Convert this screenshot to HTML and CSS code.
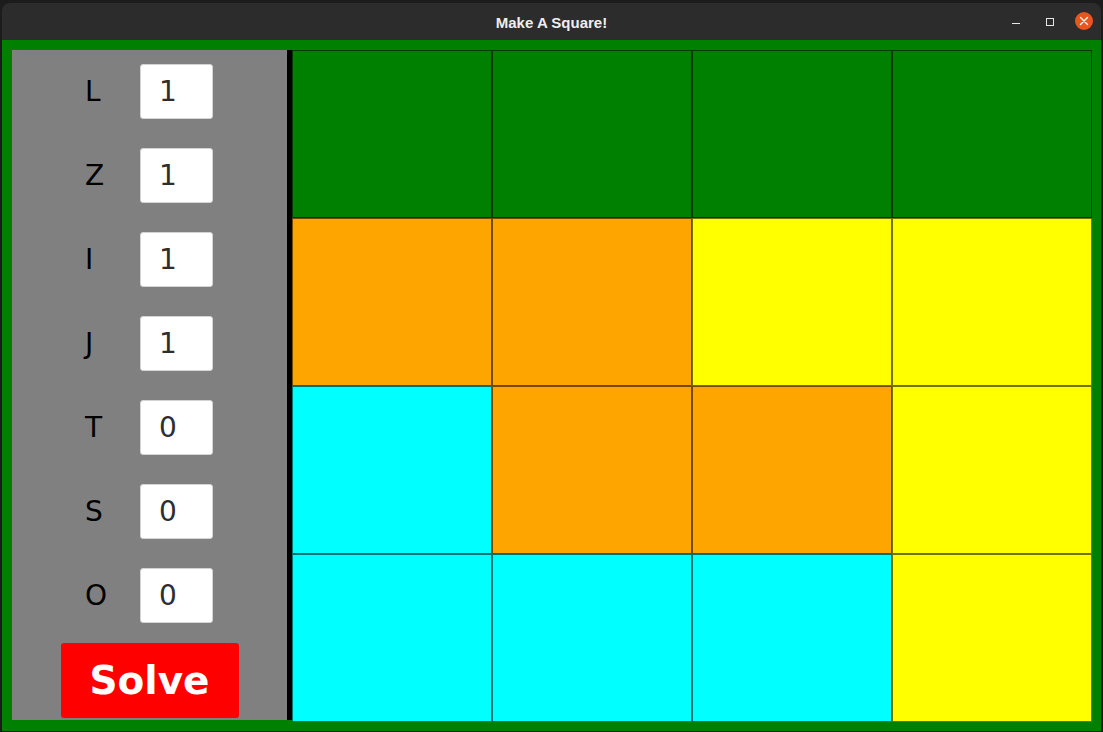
FILE: index.html
```html
<!DOCTYPE html>
<html>
<head>
<meta charset="utf-8">
<title>Make A Square!</title>
<link rel="stylesheet" href="styles.css">
</head>
<body>
<div class="window">
  <div class="titlebar">
    <div class="spacer"></div>
    <div class="title">Make A Square!</div>
    <div class="controls">
      <span class="ctl-min"></span>
      <span class="ctl-max"></span>
      <span class="ctl-close">
        <svg width="18" height="18" viewBox="0 0 18 18"><path d="M5.5 5.5 L12.5 12.5 M12.5 5.5 L5.5 12.5" stroke="#ffffff" stroke-width="1.4" stroke-linecap="round"/></svg>
      </span>
    </div>
  </div>
  <div class="content">
    <div class="panel">
      <div class="rows">
        <div class="row"><span class="label">L</span><input class="count" type="text" value="1"></div>
        <div class="row"><span class="label">Z</span><input class="count" type="text" value="1"></div>
        <div class="row"><span class="label">I</span><input class="count" type="text" value="1"></div>
        <div class="row"><span class="label">J</span><input class="count" type="text" value="1"></div>
        <div class="row"><span class="label">T</span><input class="count" type="text" value="0"></div>
        <div class="row"><span class="label">S</span><input class="count" type="text" value="0"></div>
        <div class="row"><span class="label">O</span><input class="count" type="text" value="0"></div>
      </div>
      <button class="solve">Solve</button>
    </div>
    <div class="sep"></div>
    <div class="grid">
      <div class="cell green"></div><div class="cell green"></div><div class="cell green"></div><div class="cell green"></div>
      <div class="cell orange"></div><div class="cell orange"></div><div class="cell yellow"></div><div class="cell yellow"></div>
      <div class="cell cyan"></div><div class="cell orange"></div><div class="cell orange"></div><div class="cell yellow"></div>
      <div class="cell cyan"></div><div class="cell cyan"></div><div class="cell cyan"></div><div class="cell yellow"></div>
    </div>
  </div>
</div>
</body>
</html>
```

FILE: styles.css
```css
html, body {
  margin: 0;
  padding: 0;
}
body {
  background: #1c1c1c;
  width: 1103px;
  height: 732px;
  overflow: hidden;
  padding: 3px 2px 1px 2px;
  box-sizing: border-box;
  font-family: "DejaVu Sans", sans-serif;
}
.window {
  width: 1099px;
  height: 728px;
  display: flex;
  flex-direction: column;
}
.titlebar {
  height: 37px;
  background: #2c2c2c;
  border-radius: 8px 8px 0 0;
  display: grid;
  grid-template-columns: 1fr auto 1fr;
  align-items: center;
}
.title {
  font-family: "Liberation Sans", Arial, sans-serif;
  font-weight: bold;
  font-size: 15px;
  color: #eeeeee;
  padding-top: 1px;
}
.controls {
  justify-self: end;
  display: flex;
  align-items: center;
  padding-right: 8px;
}
.ctl-min {
  width: 8px;
  height: 1px;
  background: #e6e6e6;
  margin-top: 4px;
  margin-right: 26px;
}
.ctl-max {
  width: 6px;
  height: 6px;
  border: 1px solid #e6e6e6;
  margin-right: 21px;
}
.ctl-close {
  width: 18px;
  height: 18px;
  border-radius: 50%;
  background: #e9541f;
  display: block;
  margin-top: -1px;
}
.ctl-close svg {
  display: block;
}
.content {
  flex: 1;
  background: #008000;
  display: flex;
  align-items: flex-start;
  padding: 10px 9px 9px 10px;
}
.panel {
  width: 275px;
  height: 670px;
  background: #808080;
  display: flex;
  flex-direction: column;
  box-sizing: border-box;
  padding-top: 14px;
}
.rows {
  display: flex;
  flex-direction: column;
  gap: 29px;
}
.row {
  display: flex;
  align-items: center;
  height: 55px;
  padding-left: 73px;
}
.label {
  width: 55px;
  font-size: 28px;
  color: #000000;
}
.count {
  width: 73px;
  height: 55px;
  box-sizing: border-box;
  border: 1px solid #d4d4d4;
  border-radius: 3px;
  background: #ffffff;
  margin: 0;
  padding: 0 0 0 18px;
  font-family: "DejaVu Sans", sans-serif;
  font-size: 28px;
  color: #2e2e2e;
  outline: none;
}
.solve {
  align-self: center;
  margin-top: 20px;
  width: 178px;
  height: 75px;
  background: #ff0000;
  border: none;
  border-radius: 3px;
  color: #ffffff;
  font-family: "DejaVu Sans", sans-serif;
  font-weight: bold;
  font-size: 39px;
  padding: 0;
}
.sep {
  width: 5px;
  height: 670px;
  background: #000000;
}
.grid {
  display: grid;
  grid-template-columns: repeat(4, 200px);
  grid-template-rows: repeat(4, 168px);
}
.cell {
  box-sizing: border-box;
  border: 1px solid rgba(0, 0, 0, 0.55);
}
.green { background: #008000; }
.orange { background: #ffa500; }
.yellow { background: #ffff00; }
.cyan { background: #00ffff; }
```
